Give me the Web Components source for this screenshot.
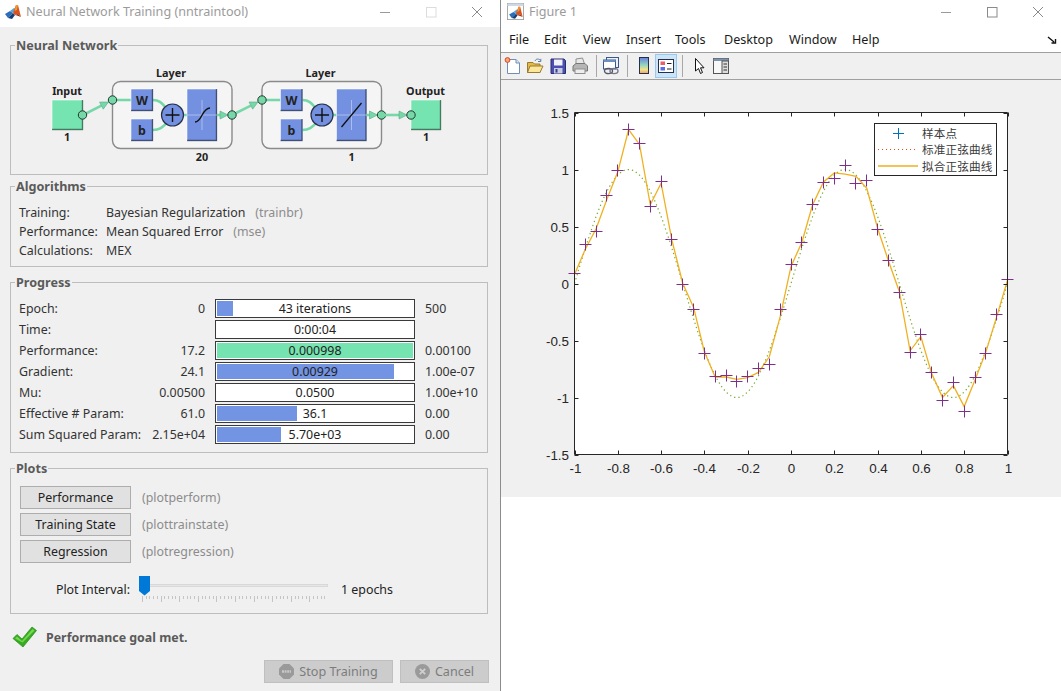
<!DOCTYPE html>
<html>
<head>
<meta charset="utf-8">
<title>nntraintool</title>
<style>
  html, body { margin: 0; padding: 0; background: #fff; }
  body { font-family: "Noto Sans", "Liberation Sans", sans-serif; }
  #desk { display: flex; width: 1061px; height: 691px; overflow: hidden; }
</style>
</head>
<body>
<div id="desk">
  <train-window></train-window>
  <figure-window></figure-window>
</div>
<script>
const UI_FONT = '"Noto Sans", "Liberation Sans", sans-serif';

const LOGO = `
  <path d="M0 10 L5 7 L8 9 L3 14 Z" fill="#2a6fb8"/>
  <path d="M5 7 L9 4 L11 5 L8 9 Z" fill="#5ba3d6"/>
  <path d="M3 14 L8 9 L10 11 L7 15 Z" fill="#123f78"/>
  <path d="M8 9 L11 1 L13 1 L16 13 L13 10 L10 11 Z" fill="#d9531e"/>
  <path d="M11 1 L13 1 L12 6 L9.5 7 Z" fill="#f09a2e"/>
  <path d="M10 11 L13 10 L16 13 L12 11.5 Z" fill="#8f2a12"/>`;

class TitleBar extends HTMLElement {
  constructor() {
    super();
    this.attachShadow({ mode: 'open' });
  }
  connectedCallback() {
    const lightMax = this.hasAttribute('light-max');
    this.shadowRoot.innerHTML = `
      <style>
        :host { display: flex; align-items: center; box-sizing: border-box; height: 27px; padding-bottom: 4px; background: #fff; color: #9b9b9b; font-size: 12.6px; }
        .logo { margin-left: var(--logo-left, 5px); display: flex; }
        .name { margin-left: var(--name-left, 5px); flex: 1; white-space: nowrap; }
        .btn { width: 46px; display: flex; justify-content: center; }
      </style>
      <span class="logo"><slot name="logo"></slot></span>
      <span class="name"><slot></slot></span>
      <span class="btn"><svg width="12" height="12"><path d="M1 6.5H11" stroke="#9a9a9a"/></svg></span>
      <span class="btn"><svg width="12" height="12"><rect x="1.5" y="1.5" width="9.5" height="9.5" fill="none" stroke="${lightMax ? '#dcdcdc' : '#8a8a8a'}"/></svg></span>
      <span class="btn"><svg width="12" height="12"><path d="M1 1L11 11M11 1L1 11" stroke="#8a8a8a"/></svg></span>`;
  }
}
customElements.define('title-bar', TitleBar);

class GroupBox extends HTMLElement {
  constructor() {
    super();
    this.attachShadow({ mode: 'open' });
  }
  connectedCallback() {
    this.shadowRoot.innerHTML = `
      <style>
        :host { display: block; box-sizing: border-box; position: relative; margin-left: 10px; width: 478px; border: 1px solid #bdbdbd; }
        .cap { position: absolute; left: 4px; top: -9px; padding: 0 1px; background: #f0f0f0; color: #5a5a5a; font-size: 12.6px; font-weight: 700; line-height: 17px; }
      </style>
      <span class="cap">${this.getAttribute('label')}</span>
      <slot></slot>`;
  }
}
customElements.define('group-box', GroupBox);

class NnDiagram extends HTMLElement {
  constructor() {
    super();
    this.attachShadow({ mode: 'open' });
  }
  node(x, y) {
    return `<circle cx="${x}" cy="${y}" r="4.2" fill="#76d8a8" stroke="#1f3a2c" stroke-width="1"/>`;
  }
  arrow(x1, y1, x2, y2) {
    const a = Math.atan2(y2 - y1, x2 - x1), c = Math.cos(a), s = Math.sin(a);
    const bx = x2 - 8 * c, by = y2 - 8 * s;
    return `<path d="M${x1} ${y1}L${bx} ${by}" stroke="#76d8a8" stroke-width="2.6"/>
      <path d="M${x2} ${y2}L${bx - 4 * s} ${by + 4 * c}L${bx + 4 * s} ${by - 4 * c}Z" fill="#76d8a8" stroke="#5aa783" stroke-width=".6"/>`;
  }
  bevel(x, y, w, h, fill) {
    return `<rect x="${x}" y="${y}" width="${w}" height="${h}" fill="${fill}"/>
      <path d="M${x} ${y + h}V${y}H${x + w}" fill="none" stroke="#fff" stroke-opacity=".55"/>
      <path d="M${x} ${y + h - .5}H${x + w - .5}V${y}" fill="none" stroke="#000" stroke-opacity=".45" stroke-width="1.4"/>`;
  }
  layer(dx, curve, count, cx) {
    return `<g transform="translate(${dx} 0)">
      <rect x="112.5" y="81.5" width="119.5" height="67" rx="8" fill="#f5f5f5" stroke="#8a8a8a" stroke-width="1.4"/>
      <path d="M112 100H131M153 100C162 100 164 107 170 112M153 130C162 130 164 125 170 120M183 115H187" fill="none" stroke="#76d8a8" stroke-width="2.6"/>
      ${this.bevel(131, 89, 22, 22, '#7391e0')}
      ${this.bevel(131, 119, 22, 22, '#7391e0')}
      ${this.bevel(187, 89, 30, 52, '#7391e0')}
      <path d="M187 115H217M202 100V130" stroke="#b9c8f0" stroke-width=".8"/>
      <path d="${curve}" fill="none" stroke="#111" stroke-width="1.3"/>
      <circle cx="172.5" cy="115" r="11" fill="#7391e0" stroke="#26304a" stroke-width="1.2"/>
      <path d="M172.5 108V122M165.5 115H179.5" stroke="#111" stroke-width="1.4"/>
      <text x="142" y="105" class="t" style="font-size:12.4px">W</text>
      <text x="142" y="135" class="t" style="font-size:12.4px">b</text>
      <text x="171" y="77" class="t">Layer</text>
      <text x="${cx}" y="161" class="t">${count}</text>
      ${this.arrow(217, 115, 228, 115)}
      ${this.node(232, 115)}
      ${this.node(112.5, 100)}
    </g>`;
  }
  connectedCallback() {
    this.shadowRoot.innerHTML = `
      <style>
        :host { display: block; height: 128px; }
        svg { display: block; }
        .t { font: 700 10.8px ${UI_FONT}; fill: #222; text-anchor: middle; }
      </style>
      <svg width="476" height="128" viewBox="11 46 476 128">
        ${this.bevel(52, 100, 31, 30, '#76e4b0')}
        ${this.bevel(411, 100, 30, 30, '#76e4b0')}
        ${this.arrow(83, 115, 108.5, 102)}
        ${this.arrow(232, 115, 258, 102)}
        ${this.layer(0, 'M195 122C202 122 202 108 210 108', 20, 202)}
        ${this.layer(149.5, 'M192 127L212 103', 1, 202)}
        ${this.arrow(381, 115, 407, 115)}
        ${this.node(82.5, 115)}
        ${this.node(411, 115)}
        <text x="67" y="95" class="t">Input</text>
        <text x="67" y="141" class="t">1</text>
        <text x="425.5" y="95" class="t">Output</text>
        <text x="426" y="141" class="t">1</text>
      </svg>`;
  }
}
customElements.define('nn-diagram', NnDiagram);

class AlgoRow extends HTMLElement {
  constructor() {
    super();
    this.attachShadow({ mode: 'open' });
  }
  connectedCallback() {
    const fn = this.getAttribute('fn');
    this.shadowRoot.innerHTML = `
      <style>
        :host { display: grid; grid-template-columns: 87px auto; height: 19px; line-height: 19px; font-size: 12.4px; color: #333; white-space: nowrap; }
        .fn { color: #8c8c8c; margin-left: 10px; }
      </style>
      <span>${this.getAttribute('label')}</span>
      <span>${this.getAttribute('value')}${fn ? `<span class="fn">${fn}</span>` : ''}</span>`;
  }
}
customElements.define('algo-row', AlgoRow);

class ProgressRow extends HTMLElement {
  constructor() {
    super();
    this.attachShadow({ mode: 'open' });
  }
  connectedCallback() {
    const fill = this.getAttribute('fill') || 0;
    const color = this.getAttribute('color') || '#7393e3';
    this.shadowRoot.innerHTML = `
      <style>
        :host { display: grid; grid-template-columns: 196px 200px auto; height: 21px; align-items: center; font-size: 12.4px; color: #333; white-space: nowrap; }
        .head { display: flex; justify-content: space-between; padding-right: 10px; }
        .bar { box-sizing: border-box; height: 19px; border: 1px solid #3a3a3a; padding: 1px;
               background: #fff; text-align: center; line-height: 15px; color: #222; }
        .in { height: 15px; background: linear-gradient(${color}, ${color}) no-repeat; background-size: ${fill}px 100%; }
        .end { padding-left: 10px; }
      </style>
      <span class="head"><span>${this.getAttribute('label')}</span><span>${this.getAttribute('start') || ''}</span></span>
      <span class="bar"><div class="in">${this.getAttribute('text')}</div></span>
      <span class="end">${this.getAttribute('end') || ''}</span>`;
  }
}
customElements.define('progress-row', ProgressRow);

class PlotRow extends HTMLElement {
  constructor() {
    super();
    this.attachShadow({ mode: 'open' });
  }
  connectedCallback() {
    this.shadowRoot.innerHTML = `
      <style>
        :host { display: flex; align-items: center; height: 23px; margin-bottom: 4px; font-size: 12.4px; color: #8c8c8c; white-space: nowrap; }
        .b { box-sizing: border-box; width: 111px; height: 23px; line-height: 21px; text-align: center; background: #e1e1e1; border: 1px solid #adadad; color: #222; margin-right: 11px; }
      </style>
      <span class="b">${this.getAttribute('label')}</span>
      <span>${this.getAttribute('fn')}</span>`;
  }
}
customElements.define('plot-row', PlotRow);

class IntervalSlider extends HTMLElement {
  constructor() {
    super();
    this.attachShadow({ mode: 'open' });
  }
  connectedCallback() {
    this.shadowRoot.innerHTML = `
      <style>
        :host { display: flex; align-items: center; height: 26px; font-size: 12.4px; color: #222; white-space: nowrap; }
        .lab { width: 110px; text-align: right; margin-right: 9px; }
        .track { position: relative; width: 189px; height: 26px; margin-right: 13px; }
        .rail { position: absolute; left: 10px; right: 0; top: 8px; background: #e7e7e7; border: 1px solid #d8d8d8; border-left: 0; height: 1px; }
        .ticks { position: absolute; left: 3px; right: 0; top: 20px; height: 6px;
          background:
            repeating-linear-gradient(90deg, #c4c4c4 0 1px, transparent 1px 18.6px) 0 0 / 100% 6px no-repeat,
            repeating-linear-gradient(90deg, #c4c4c4 0 1px, transparent 1px 3.72px) 0 0 / 100% 3px no-repeat; }
        svg { position: absolute; left: 0; top: 0; }
      </style>
      <span class="lab">Plot Interval:</span>
      <span class="track">
        <span class="rail"></span>
        <span class="ticks"></span>
        <svg width="12" height="20"><path d="M0 0H11V15L5.5 19.5L0 15Z" fill="#0078d7"/></svg>
      </span>
      <span>1 epochs</span>`;
  }
}
customElements.define('interval-slider', IntervalSlider);

class DimButton extends HTMLElement {
  constructor() {
    super();
    this.attachShadow({ mode: 'open' });
  }
  connectedCallback() {
    this.shadowRoot.innerHTML = `
      <style>
        :host { display: flex; align-items: center; justify-content: center; gap: 5px; box-sizing: border-box; height: 23px; background: #cccccc; border: 1px solid #bfbfbf; color: #7c7c7c; font-size: 12.6px; white-space: nowrap; }
        ::slotted(svg) { display: block; }
      </style>
      <slot name="icon"></slot><slot></slot>`;
  }
}
customElements.define('dim-button', DimButton);

class TrainWindow extends HTMLElement {
  constructor() {
    super();
    this.attachShadow({ mode: 'open' });
  }
  connectedCallback() {
    this.shadowRoot.innerHTML = `
      <style>
        :host { display: block; width: 500px; height: 691px; flex: none; background: #f0f0f0; }
        title-bar { --logo-left: 5px; --name-left: 4px; }
        .pad { padding: 16px 0 0 8px; }
        .prog { padding: 15px 0 0 8px; }
        .plots { padding: 17px 0 0 9px; }
        .status { display: flex; align-items: center; gap: 9px; margin: 12px 0 0 12px; height: 22px; font-size: 12.4px; font-weight: 700; color: #5a5a5a; }
        .actions { display: flex; justify-content: flex-end; gap: 7px; margin: 12px 11px 0 0; }
        .slide { margin: 13px 0 0 0; }
      </style>
      <title-bar light-max>
        <svg slot="logo" width="17" height="16" viewBox="0 0 17 16">${LOGO}</svg>
        Neural Network Training (nntraintool)
      </title-bar>
      <group-box label="Neural Network" style="margin-top:18px;height:130px"><nn-diagram></nn-diagram></group-box>
      <group-box label="Algorithms" style="margin-top:11px;height:81px">
        <div class="pad">
          <algo-row label="Training:" value="Bayesian Regularization" fn="(trainbr)"></algo-row>
          <algo-row label="Performance:" value="Mean Squared Error" fn="(mse)"></algo-row>
          <algo-row label="Calculations:" value="MEX"></algo-row>
        </div>
      </group-box>
      <group-box label="Progress" style="margin-top:15px;height:171px">
        <div class="prog">
          <progress-row label="Epoch:" start="0" text="43 iterations" end="500" fill="16"></progress-row>
          <progress-row label="Time:" text="0:00:04"></progress-row>
          <progress-row label="Performance:" start="17.2" text="0.000998" end="0.00100" fill="196" color="#76e4b0"></progress-row>
          <progress-row label="Gradient:" start="24.1" text="0.00929" end="1.00e-07" fill="177"></progress-row>
          <progress-row label="Mu:" start="0.00500" text="0.0500" end="1.00e+10"></progress-row>
          <progress-row label="Effective # Param:" start="61.0" text="36.1" end="0.00" fill="80"></progress-row>
          <progress-row label="Sum Squared Param:" start="2.15e+04" text="5.70e+03" end="0.00" fill="64"></progress-row>
        </div>
      </group-box>
      <group-box label="Plots" style="margin-top:15px;height:146px">
        <div class="plots">
          <plot-row label="Performance" fn="(plotperform)"></plot-row>
          <plot-row label="Training State" fn="(plottrainstate)"></plot-row>
          <plot-row label="Regression" fn="(plotregression)"></plot-row>
          <interval-slider class="slide"></interval-slider>
        </div>
      </group-box>
      <div class="status">
        <svg width="25" height="22" viewBox="0 0 25 22">
          <path d="M1 12.5L5 8.5L10 13L20 1L24.5 4.5L11 21Z" fill="#35ad20" stroke="#2a8a1a" stroke-width=".7"/>
          <path d="M3 12.5L5 10.5L10 15L20.5 3L22.5 4.5L10.5 16.5Z" fill="#74d850"/>
        </svg>
        <span>Performance goal met.</span>
      </div>
      <div class="actions">
        <dim-button style="width:129px">
          <svg slot="icon" width="15" height="15" viewBox="0 0 15 15"><path d="M4.5 0H10.5L15 4.5V10.5L10.5 15H4.5L0 10.5V4.5Z" fill="#9a9a9a"/><path d="M3 7.5H12" stroke="#c8c8c8" stroke-width="2.4" stroke-dasharray="2 .6"/></svg>
          Stop Training
        </dim-button>
        <dim-button style="width:89px">
          <svg slot="icon" width="15" height="15" viewBox="0 0 15 15"><circle cx="7.5" cy="7.5" r="7.5" fill="#9a9a9a"/><path d="M4.8 4.8L10.2 10.2M10.2 4.8L4.8 10.2" stroke="#cfcfcf" stroke-width="1.8"/></svg>
          Cancel
        </dim-button>
      </div>`;
  }
}
customElements.define('train-window', TrainWindow);

class ToolIcon extends HTMLElement {
  constructor() {
    super();
    this.attachShadow({ mode: 'open' });
  }
  connectedCallback() {
    const selected = this.hasAttribute('selected');
    this.shadowRoot.innerHTML = `
      <style>
        :host { display: flex; align-items: center; justify-content: center; box-sizing: border-box; width: 22px; height: 24px; ${selected ? 'background:#cce4f7;border:1px solid #99c9ef;' : ''} }
        ::slotted(svg) { display: block; }
      </style>
      <slot></slot>`;
  }
}
customElements.define('tool-icon', ToolIcon);

class FigureToolbar extends HTMLElement {
  constructor() {
    super();
    this.attachShadow({ mode: 'open' });
  }
  connectedCallback() {
    this.shadowRoot.innerHTML = `
      <style>
        :host { display: flex; align-items: center; box-sizing: border-box; height: 28px; padding-left: 1px; background: #f0f0f0; border-top: 1px solid #a0a0a0; border-bottom: 1px solid #a0a0a0; }
        i { display: block; width: 1px; height: 22px; background: #a8a8a8; margin: 0 4.5px; }
      </style>
      <tool-icon><svg width="18" height="18" viewBox="0 0 18 18"><path d="M3.5 2.5H12L15.5 6V16.5H3.5Z" fill="#fff" stroke="#6f8fb5"/><path d="M12 2.5V6H15.5" fill="#dbe6f3" stroke="#6f8fb5"/><circle cx="3.5" cy="3" r="2.4" fill="#f5a67c" stroke="#d9481f"/></svg></tool-icon>
      <tool-icon><svg width="18" height="18" viewBox="0 0 18 18"><path d="M1.5 5.5H7L8.5 7H14V15.5H1.5Z" fill="#e3b94b" stroke="#9c7a2a"/><path d="M1.5 15.5L4 9H17L14 15.5Z" fill="#fbe79c" stroke="#9c7a2a"/><path d="M9 4C10 1.5 13 1.5 14.5 3.5" fill="none" stroke="#5b7da8"/><path d="M14.8 1.8V4.5H12" fill="none" stroke="#5b7da8"/></svg></tool-icon>
      <tool-icon style="margin-left:1px"><svg width="18" height="18" viewBox="0 0 18 18"><path d="M2 2H15L16.5 3.5V16.5H2Z" fill="#4a4fb0" stroke="#2a2c70"/><rect x="5" y="2.5" width="8.5" height="6" fill="#f2f2f8"/><rect x="5" y="11" width="8.5" height="5.5" fill="#c9cbe0"/><rect x="6.5" y="12" width="2" height="3.5" fill="#3b3f92"/></svg></tool-icon>
      <tool-icon><svg width="18" height="18" viewBox="0 0 18 18"><path d="M5 2L11.5 1L13.5 7H5Z" fill="#e8e8e8" stroke="#8f8f8f"/><path d="M2 9L5 6.5H14L16.5 9V14H2Z" fill="#b5b5b5" stroke="#777"/><rect x="4" y="12" width="10" height="4.5" fill="#ededed" stroke="#8f8f8f"/></svg></tool-icon>
      <i style="margin-right:3.5px"></i>
      <tool-icon><svg width="20" height="20" viewBox="0 0 20 20"><rect x="5.5" y="1.5" width="12" height="10" fill="#eef2f8" stroke="#375a8c"/><rect x="2.5" y="4" width="12" height="9" fill="#fff" stroke="#375a8c"/><rect x="2.5" y="4" width="12" height="2" fill="#6f8fc2"/><ellipse cx="7.5" cy="15" rx="4" ry="2.6" fill="none" stroke="#556" stroke-width="1.4"/><ellipse cx="13" cy="15" rx="4" ry="2.6" fill="none" stroke="#778" stroke-width="1.4"/></svg></tool-icon>
      <i></i>
      <tool-icon style="margin-left:1px"><svg width="18" height="20" viewBox="0 0 18 20"><defs><linearGradient id="cb" x1="0" y1="0" x2="0" y2="1"><stop offset="0" stop-color="#6b7fd8"/><stop offset=".45" stop-color="#8fd3c4"/><stop offset=".75" stop-color="#efe38a"/><stop offset="1" stop-color="#f0a070"/></linearGradient></defs><rect x="4.5" y="1.5" width="9" height="16" fill="url(#cb)" stroke="#26304a"/></svg></tool-icon>
      <tool-icon selected><svg width="18" height="18" viewBox="0 0 18 18"><rect x="1.5" y="2.5" width="15" height="13" fill="#fff" stroke="#26304a"/><rect x="3.5" y="4.5" width="4.5" height="3.5" fill="#e8606a"/><rect x="3.5" y="10" width="4.5" height="3.5" fill="#5a6fe0"/><path d="M10 6.5H14.5M10 12H14.5" stroke="#222"/></svg></tool-icon>
      <i style="margin-right:5.5px"></i>
      <tool-icon><svg width="16" height="18" viewBox="0 0 16 18"><path d="M4.5 1.5V14L7.5 11.5L9.5 16.5L11.5 15.5L9.5 10.8H13Z" fill="#fff" stroke="#111"/></svg></tool-icon>
      <tool-icon><svg width="18" height="18" viewBox="0 0 18 18"><rect x="1.5" y="1.5" width="15" height="15" fill="#f8f8f8" stroke="#555"/><rect x="1.5" y="1.5" width="15" height="2.5" fill="#7d93ad"/><rect x="10" y="4" width="6.5" height="12.5" fill="#ddd" stroke="#555"/><path d="M11.5 7H15M11.5 10H15M11.5 13H15" stroke="#333"/></svg></tool-icon>`;
  }
}
customElements.define('figure-toolbar', FigureToolbar);

class SinePlot extends HTMLElement {
  constructor() {
    super();
    this.attachShadow({ mode: 'open' });
    this.samples = [.09,.344,.455,.77,.993,1.355,1.23,.674,.896,.388,-.007,-.232,-.616,-.82,-.81,-.858,-.817,-.744,-.712,-.232,.168,.361,.69,.888,.923,1.037,.875,.905,.475,.2,-.08,-.604,-.443,-.78,-1.025,-.87,-1.124,-.826,-.612,-.276,.037];
    this.fit = [.08,.3,.48,.74,.98,1.35,1.22,.69,.88,.38,0,-.21,-.6,-.82,-.82,-.84,-.825,-.78,-.64,-.29,.15,.36,.69,.89,.97,.96,.94,.835,.485,.2,-.07,-.59,-.467,-.79,-1,-.896,-1.08,-.846,-.6,-.29,.03];
  }
  px(x) { return 574.5 + (x + 1) * 216.5; }
  py(y) { return 283.5 - y * 114; }
  connectedCallback() {
    let ticks = '', labels = '';
    for (let i = 0; i <= 10; i++) {
      const v = -1 + i * .2, x = Math.round(this.px(v)) + .5;
      ticks += `M${x} 454.5v-4M${x} 112.5v4`;
      const s = i === 5 ? '0' : String(+v.toFixed(1));
      labels += `<text x="${x}" y="473" text-anchor="middle">${s}</text>`;
    }
    for (let i = 0; i <= 6; i++) {
      const v = -1.5 + i * .5, y = Math.round(this.py(v)) + .5;
      ticks += `M574.5 ${y}h4M1007.5 ${y}h-4`;
      labels += `<text x="569" y="${y + 4}" text-anchor="end">${v}</text>`;
    }
    let sine = '';
    for (let i = 0; i <= 200; i++) {
      const x = -1 + i / 100;
      sine += `${i ? 'L' : 'M'}${this.px(x).toFixed(1)} ${this.py(Math.sin(2 * Math.PI * x)).toFixed(1)}`;
    }
    const fitPath = this.fit.map((y, i) => `${i ? 'L' : 'M'}${this.px(-1 + i * .05).toFixed(1)} ${this.py(y).toFixed(1)}`).join('');
    const plus = this.samples.map((y, i) => {
      // snap to the pixel grid so the crosses stay crisp
      const x = Math.floor(this.px(-1 + i * .05)) + .5, yy = Math.floor(this.py(y)) + .5;
      return `M${x - 6} ${yy}h12M${x} ${yy - 6}v12`;
    }).join('');
    this.shadowRoot.innerHTML = `
      <style>
        :host { display: block; height: 417px; background: #f0f0f0; }
        svg { display: block; }
        .lab { font: 13.4px "Liberation Sans", sans-serif; fill: #262626; }
        .leg { font: 11.6px "Noto Sans CJK SC", "Noto Sans", sans-serif; fill: #3a3a3a; letter-spacing: .15px; }
      </style>
      <svg width="560" height="417" viewBox="501 80 560 417">
        <rect x="574.5" y="112.5" width="433" height="342" fill="#fff"/>
        <path d="${sine}" fill="none" stroke="#77ac30" stroke-width="1.2" stroke-dasharray="1.3 3"/>
        <path d="${fitPath}" fill="none" stroke="#f0b020" stroke-width="1.3"/>
        <path d="${plus}" fill="none" stroke="#7e2f8e" stroke-width="1"/>
        <path d="M574.5 112.5H1007.5V454.5H574.5Z${ticks}" fill="none" stroke="#262626" stroke-width="1"/>
        <g class="lab">${labels}</g>
        <rect x="874.5" y="123.5" width="122" height="52" fill="#fff" stroke="#262626"/>
        <path d="M893 133.5h11M898.5 128v11" stroke="#0072bd"/>
        <path d="M878 149.5H918" stroke="#d95319" stroke-dasharray="1 3"/>
        <path d="M878 166H918" stroke="#edb120" stroke-width="1.4"/>
        <g class="leg">
          <text x="922" y="138">样本点</text>
          <text x="922" y="154">标准正弦曲线</text>
          <text x="922" y="171">拟合正弦曲线</text>
        </g>
      </svg>`;
  }
}
customElements.define('sine-plot', SinePlot);

class FigureWindow extends HTMLElement {
  constructor() {
    super();
    this.attachShadow({ mode: 'open' });
  }
  connectedCallback() {
    this.shadowRoot.innerHTML = `
      <style>
        :host { display: block; width: 561px; height: 691px; box-sizing: border-box; flex: none; background: #fff; border-left: 1px solid #8c8c8c; }
        title-bar { --logo-left: 6px; --name-left: 5px; }
        .menu { display: flex; align-items: center; height: 25px; font-size: 12.6px; color: #1a1a1a; padding-left: 8px; }
        .menu span { white-space: nowrap; }
        .corner { margin-left: auto; margin-right: 4px; display: flex; }
      </style>
      <title-bar>
        <svg slot="logo" width="17" height="17" viewBox="-1.5 -1.5 20 20"><rect x="-1" y="-1" width="19" height="19" fill="#fff" stroke="#9a9a9a"/><rect x="-1" y="-1" width="19" height="3" fill="#cfd8e6"/><g transform="translate(1 2)">${LOGO}</g></svg>
        Figure 1
      </title-bar>
      <div class="menu">
        <span style="width:35px">File</span><span style="width:39px">Edit</span><span style="width:43px">View</span><span style="width:49px">Insert</span><span style="width:49px">Tools</span><span style="width:65px">Desktop</span><span style="width:63px">Window</span><span>Help</span>
        <span class="corner"><svg width="10" height="10" viewBox="0 0 10 10"><path d="M1 2L7 7M4.5 8H8.5V4" fill="none" stroke="#111" stroke-width="1.4"/></svg></span>
      </div>
      <figure-toolbar></figure-toolbar>
      <sine-plot></sine-plot>`;
  }
}
customElements.define('figure-window', FigureWindow);
</script>
</body>
</html>
